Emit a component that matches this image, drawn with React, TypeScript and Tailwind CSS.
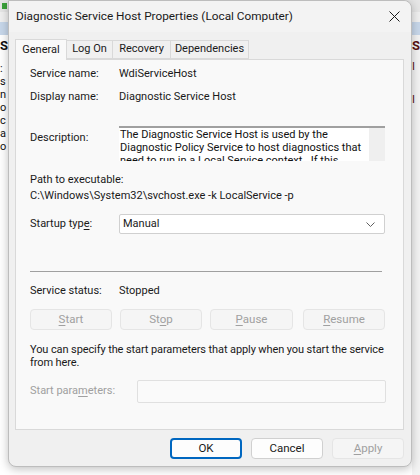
import React from "react";

const font = { fontFamily: "Roboto, 'Liberation Sans', sans-serif" };

function Btn({
  label,
  u,
  rest,
  disabled,
  primary,
  className = "",
}: {
  label: string;
  u: string;
  rest: string;
  disabled?: boolean;
  primary?: boolean;
  className?: string;
}) {
  const base = "h-[21px] flex items-center justify-center rounded-[4px] text-[11.5px]";
  const look = disabled
    ? "border border-[#e5e5e5] bg-[#f5f5f5] text-[#a0a0a0]"
    : primary
    ? "border-2 border-[#0067c0] bg-[#fdfdfd] text-[#1a1a1a]"
    : "border border-[#d0d0d0] bg-[#fdfdfd] text-[#1a1a1a]";
  return (
    <div className={`${base} ${look} ${className}`}>
      <span>
        {label}
        <span className="underline underline-offset-2">{u}</span>
        {rest}
      </span>
    </div>
  );
}

export default function App() {
  return (
    <div className="relative w-[420px] h-[475px] bg-[#c8c8c8] overflow-hidden" style={font}>
      {/* window behind the dialog */}
      <div className="flex flex-col h-full">
        <div className="h-[12px] bg-[#e6e6e6] flex items-center px-[2px]">
          <div className="w-[5px] h-[6px] bg-[#3aa13a]" />
        </div>
        <div className="h-[10px] bg-[#f0f0f0]" />
        <div className="h-[13px] bg-[#c7d7ea]" />
        <div className="flex-1 bg-white flex justify-between">
          <div className="w-[8px] text-[11px] leading-[13px] text-[#111] overflow-hidden pt-[3px]">
            <div className="font-bold text-[13px] leading-[16px]">S</div>
            <div className="h-[8px]" />
            <div>:</div>
            <div>s</div>
            <div>n</div>
            <div>o</div>
            <div>c</div>
            <div>a</div>
            <div>o</div>
          </div>
          <div className="w-[8px] bg-[#f3f3f3] text-[11px] leading-[13px] text-[#5a1414] pt-[3px] overflow-hidden">
            <div className="font-bold text-[13px] leading-[16px]">S</div>
            <div className="mt-[6px]">I</div>
            <div className="mt-[20px]">I</div>
          </div>
        </div>
      </div>

      {/* dialog */}
      <div className="absolute left-[8px] top-0 w-[404px] h-[467px] bg-[#f0f0f0] border border-[#bdbdbd] rounded-b-[8px] rounded-tr-[8px] shadow-[0_2px_10px_rgba(0,0,0,0.25)] flex flex-col text-[11px] text-[#1a1a1a]">
        {/* title bar */}
        <div className="h-[31px] flex items-center justify-between pl-[7px] pr-[10px] bg-[#f3f3f3] rounded-tr-[8px]">
          <span className="text-[11.8px] text-[#1a1a1a]">Diagnostic Service Host Properties (Local Computer)</span>
          <svg width="11" height="11" viewBox="0 0 11 11" className="mr-[1px]">
            <path d="M0.5 0.5 L10.5 10.5 M10.5 0.5 L0.5 10.5" stroke="#1a1a1a" strokeWidth="1" />
          </svg>
        </div>

        {/* tabs */}
        <div className="px-[6px] pt-[6px] flex items-end h-[27px]">
          <div className="h-[21px] w-[52px] bg-[#f9f9f9] border border-b-0 border-[#d9d9d9] flex items-center justify-center relative z-10 -mb-px">
            General
          </div>
          <div className="h-[19px] w-[46px] bg-[#f0f0f0] border border-l-0 border-[#d9d9d9] flex items-center justify-center">
            Log On
          </div>
          <div className="h-[19px] w-[58px] bg-[#f0f0f0] border border-l-0 border-[#d9d9d9] flex items-center justify-center">
            Recovery
          </div>
          <div className="h-[19px] w-[78px] bg-[#f0f0f0] border border-l-0 border-[#d9d9d9] flex items-center justify-center">
            Dependencies
          </div>
        </div>

        {/* panel */}
        <div className="mx-[6px] w-[389px] h-[371px] bg-[#f9f9f9] border border-[#d9d9d9] pl-[14px] pr-[17px] pt-[6px] flex flex-col">
          <div className="flex h-[16px] items-center">
            <span className="w-[89px]">Service name:</span>
            <span>WdiServiceHost</span>
          </div>
          <div className="flex h-[16px] items-center mt-[7px]">
            <span className="w-[89px]">Display name:</span>
            <span>Diagnostic Service Host</span>
          </div>
          <div className="flex mt-[21px]">
            <span className="w-[89px] pt-[4px]">Description:</span>
            <div className="w-[266px] h-[35px] border-t-2 border-[#a0a0a0] bg-white flex overflow-hidden">
              <div className="flex-1 pl-[1px] pr-[2px] leading-[13px] text-[11px] text-[#111]">
                The Diagnostic Service Host is used by the Diagnostic Policy Service to host diagnostics that
                need to run in a Local Service context.&nbsp; If this service is stopped, any diagnostics that depend on it will no longer function.
              </div>
              <div className="w-[16px] shrink-0 bg-[#efefef]" />
            </div>
          </div>
          <div className="h-[16px] flex items-center mt-[11px]">Path to executable:</div>
          <div className="h-[16px] flex items-center">C:\Windows\System32\svchost.exe -k LocalService -p</div>
          <div className="flex items-center mt-[10px]">
            <span className="w-[89px]">
              Startup typ<span className="underline underline-offset-2">e</span>:
            </span>
            <div className="w-[266px] h-[20px] bg-white border border-[#d0d0d0] rounded-[2px] flex items-center justify-between pl-[3px] pr-[9px]">
              <span>Manual</span>
              <svg width="9" height="5" viewBox="0 0 9 5">
                <path d="M0.5 0.5 L4.5 4.5 L8.5 0.5" stroke="#606060" fill="none" strokeWidth="1" />
              </svg>
            </div>
          </div>
          <div className="h-px bg-[#a0a0a0] mt-[37px] w-[352px]" />
          <div className="flex h-[16px] items-center mt-[11px]">
            <span className="w-[89px]">Service status:</span>
            <span>Stopped</span>
          </div>
          <div className="flex mt-[10px] gap-[8px] w-[355px]">
            <Btn label="" u="S" rest="tart" disabled className="w-[82px]" />
            <Btn label="St" u="o" rest="p" disabled className="w-[82px]" />
            <Btn label="" u="P" rest="ause" disabled className="w-[83px]" />
            <Btn label="" u="R" rest="esume" disabled className="w-[82px] ml-[2px]" />
          </div>
          <div className="mt-[13px] leading-[13px] whitespace-nowrap tracking-[-0.1px]">
            You can specify the start parameters that apply when you start the service
            <br />
            from here.
          </div>
          <div className="flex items-center mt-[11px]">
            <span className="w-[107px] text-[#a0a0a0]">
              Start para<span className="underline underline-offset-2">m</span>eters:
            </span>
            <div className="w-[249px] h-[23px] bg-[#fafafa] border border-[#e0e0e0] rounded-[2px]" />
          </div>
        </div>

        {/* footer buttons */}
        <div className="flex justify-end gap-[9px] pr-[7px] mt-[8px]">
          <Btn label="" u="" rest="OK" primary className="w-[72px]" />
          <Btn label="" u="" rest="Cancel" className="w-[72px]" />
          <Btn label="" u="A" rest="pply" disabled className="w-[72px]" />
        </div>
      </div>
    </div>
  );
}
